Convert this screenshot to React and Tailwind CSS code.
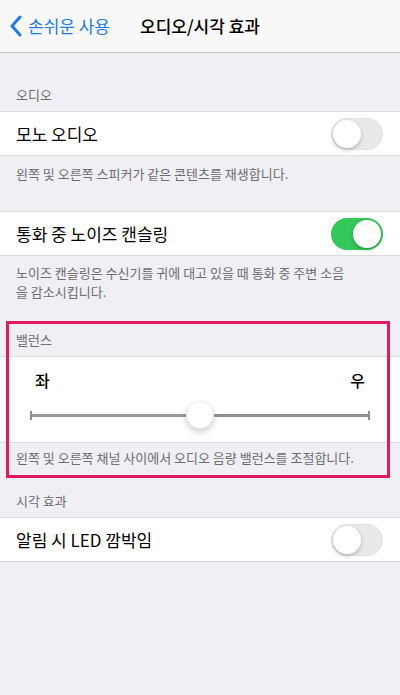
// App.jsx
// iOS 설정 > 손쉬운 사용 > 오디오/시각 효과 화면

const FONT = { fontFamily: '"Noto Sans CJK KR", "Noto Sans", sans-serif' };

function Toggle({ on }) {
    return (
        <div
            className={
                on
                    ? 'flex items-center justify-end w-[52px] h-[32px] p-[2px] rounded-full bg-[#34c759]'
                    : 'flex items-center justify-start w-[52px] h-[32px] p-[1px] rounded-full bg-[#e9e9eb] border border-[#e2e2e4]'
            }
        >
            <div className="w-[28px] h-[28px] rounded-full bg-white shadow-[0_2px_4px_rgba(0,0,0,0.22)]" />
        </div>
    );
}

function Row({ label, on }) {
    return (
        <div className="flex items-center justify-between h-[45px] bg-white border-y border-[#dcdce0] pl-4 pr-[17px]">
            <span className="text-[17px] text-black">{label}</span>
            <Toggle on={on} />
        </div>
    );
}

function Header({ children, className = '' }) {
    return (
        <div className={'flex items-end px-4 pb-[7px] text-[13px] text-[#6d6d72] ' + className}>
            {children}
        </div>
    );
}

function Footer({ children, className = '' }) {
    return (
        <div className={'px-4 text-[13px] leading-[19px] text-[#6d6d72] ' + className}>
            {children}
        </div>
    );
}

export default function App() {
    return (
        <div className="w-[400px] h-[695px] bg-[#efeff4] overflow-hidden" style={FONT}>

            {/* Nav bar */}
            <div className="grid grid-cols-[1fr_auto_1fr] items-center h-[53px] bg-[#f8f8f8] border-b border-[#c8c8cc]">
                <div className="flex items-center pl-[9px] text-[#1f7ae8]">
                    <svg width="14" height="22" viewBox="0 0 14 22">
                        <path d="M11 2 L3 11 L11 20" fill="none" stroke="currentColor" strokeWidth="3" strokeLinecap="round" strokeLinejoin="round" />
                    </svg>
                    <span className="ml-[5px] text-[17px]">손쉬운 사용</span>
                </div>
                <span className="text-[17px] font-medium text-black">오디오/시각 효과</span>
                <div />
            </div>

            {/* 오디오 */}
            <Header className="h-[58px]">오디오</Header>
            <Row label="모노 오디오" on={false} />
            <Footer className="h-[55px] pt-[8px]">
                왼쪽 및 오른쪽 스피커가 같은 콘텐츠를 재생합니다.
            </Footer>

            <Row label="통화 중 노이즈 캔슬링" on={true} />
            <Footer className="h-[65px] pt-[7px]">
                노이즈 캔슬링은 수신기를 귀에 대고 있을 때 통화 중 주변 소음
                <br />
                을 감소시킵니다.
            </Footer>

            {/* 밸런스 */}
            <div className="relative">
                <Header className="h-[35px]">밸런스</Header>
                <div className="flex flex-col h-[87px] bg-white border-y border-[#dcdce0] px-[30px]">
                    <div className="flex justify-between pt-[11px] px-[5px] text-[16px] font-medium text-black">
                        <span>좌</span>
                        <span>우</span>
                    </div>
                    <div className="flex items-center h-[30px] mt-[8px]">
                        <div className="w-[2px] h-[9px] bg-[#8e8e93]" />
                        <div className="flex-1 h-[3px] bg-[#9a9a9e]" />
                        <div className="w-[28px] h-[28px] rounded-full bg-white shadow-[0_3px_6px_rgba(0,0,0,0.2)] border border-[#ececec]" />
                        <div className="flex-1 h-[3px] bg-[#8e8e93]" />
                        <div className="w-[2px] h-[9px] bg-[#8e8e93]" />
                    </div>
                </div>
                <Footer className="h-[34px] pt-[5px]">
                    왼쪽 및 오른쪽 채널 사이에서 오디오 음량 밸런스를 조절합니다.
                </Footer>

                {/* 강조 표시 */}
                <div className="absolute left-[6px] right-[10px] top-0 bottom-[-1px] border-[3px] border-[#e3195f] pointer-events-none" />
            </div>

            {/* 시각 효과 */}
            <Header className="h-[40px]">시각 효과</Header>
            <Row label="알림 시 LED 깜박임" on={false} />
        </div>
    );
}
